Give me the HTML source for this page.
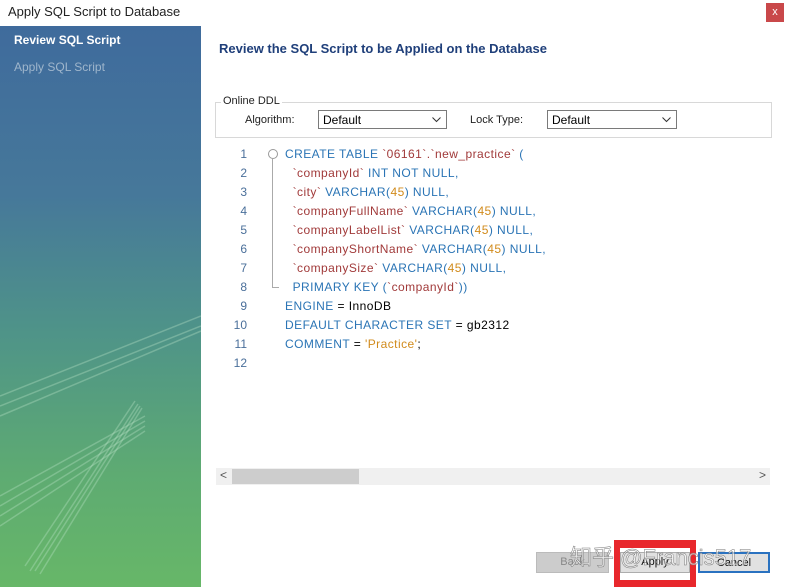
<!DOCTYPE html><html><head><style>
body{margin:0;width:786px;height:587px;position:relative;background:#fff;font-family:"Liberation Sans","Noto Sans CJK SC",sans-serif;overflow:hidden;font-size:12px}
.a{position:absolute}
.side{left:0;top:26px;width:201px;height:561px;background:linear-gradient(180deg,#3f6b9c 0%,#46789a 30%,#4f9488 55%,#5eab72 80%,#67b768 100%)}
.code div{height:19px;line-height:19px;white-space:pre}
.k{color:#2a74b5}.s{color:#a13a3a}.n{color:#d18b1c}
.ln{color:#4a6f9a;width:20px;text-align:right}
.sel{border:1px solid #7a7a7a;height:19px;background:#fff;font-size:12px;line-height:18px;padding-left:4px;box-sizing:border-box}
.btn{height:21px;box-sizing:border-box;text-align:center;line-height:19px;font-size:11px}
</style></head><body>
<div class="a" style="left:8px;top:4px;font-size:13px;color:#222">Apply SQL Script to Database</div>
<div class="a" style="left:766px;top:3px;width:18px;height:19px;background:#c9484a;color:#fff;font-size:11px;text-align:center;line-height:18px">x</div>
<div class="a side">
<svg width="201" height="561" style="position:absolute;left:0;top:0" fill="none" stroke="rgba(190,230,200,0.35)" stroke-width="1.5">
<path d="M0 370 L201 290 M0 380 L201 300 M0 390 L201 305 M0 470 L145 390 M0 480 L145 395 M0 490 L145 400 M0 500 L145 405"/>
<path d="M25 540 L135 375 M30 545 L138 378 M35 545 L140 380 M40 548 L142 382"/>
</svg>
</div>
<div class="a" style="left:14px;top:33px;color:#fff;font-weight:bold;font-size:12px">Review SQL Script</div>
<div class="a" style="left:14px;top:60px;color:#9fb6cc;font-size:12px">Apply SQL Script</div>
<div class="a" style="left:219px;top:41px;color:#1f3f7a;font-weight:bold;font-size:13px">Review the SQL Script to be Applied on the Database</div>
<div class="a" style="left:215px;top:102px;width:555px;height:34px;border:1px solid #d8d8d8"></div>
<div class="a" style="left:221px;top:95px;background:#fff;padding:0 2px;font-size:11px;color:#222">Online DDL</div>
<div class="a" style="left:245px;top:114px;font-size:11px;color:#222">Algorithm:</div>
<div class="a sel" style="left:318px;top:110px;width:129px">Default<svg class="a" style="right:5px;top:6px" width="9" height="6"><path d="M0.5 0.5L4.5 4.5L8.5 0.5" fill="none" stroke="#333"/></svg></div>
<div class="a" style="left:470px;top:114px;font-size:11px;color:#222">Lock Type:</div>
<div class="a sel" style="left:547px;top:110px;width:130px">Default<svg class="a" style="right:5px;top:6px" width="9" height="6"><path d="M0.5 0.5L4.5 4.5L8.5 0.5" fill="none" stroke="#333"/></svg></div>
<div class="a code" style="left:227px;top:145px;font-size:12px">
<div><span class="a ln">1</span></div><div><span class="a ln">2</span></div><div><span class="a ln">3</span></div><div><span class="a ln">4</span></div><div><span class="a ln">5</span></div><div><span class="a ln">6</span></div><div><span class="a ln">7</span></div><div><span class="a ln">8</span></div><div><span class="a ln">9</span></div><div><span class="a ln">10</span></div><div><span class="a ln">11</span></div><div><span class="a ln">12</span></div>
</div>
<div class="a" style="left:268px;top:149px;width:8px;height:8px;border:1px solid #999;border-radius:50%"></div>
<div class="a" style="left:272px;top:159px;width:6px;height:128px;border-left:1px solid #aaa;border-bottom:1px solid #aaa"></div>
<div class="a code" style="left:285px;top:145px;font-size:12px;letter-spacing:0.45px">
<div><span class="k">CREATE TABLE </span><span class="s">`06161`.`new_practice`</span><span class="k"> (</span></div>
<div>  <span class="s">`companyId`</span><span class="k"> INT NOT NULL,</span></div>
<div>  <span class="s">`city`</span><span class="k"> VARCHAR(</span><span class="n">45</span><span class="k">) NULL,</span></div>
<div>  <span class="s">`companyFullName`</span><span class="k"> VARCHAR(</span><span class="n">45</span><span class="k">) NULL,</span></div>
<div>  <span class="s">`companyLabelList`</span><span class="k"> VARCHAR(</span><span class="n">45</span><span class="k">) NULL,</span></div>
<div>  <span class="s">`companyShortName`</span><span class="k"> VARCHAR(</span><span class="n">45</span><span class="k">) NULL,</span></div>
<div>  <span class="s">`companySize`</span><span class="k"> VARCHAR(</span><span class="n">45</span><span class="k">) NULL,</span></div>
<div><span class="k">  PRIMARY KEY (</span><span class="s">`companyId`</span><span class="k">))</span></div>
<div><span class="k">ENGINE </span>= InnoDB</div>
<div><span class="k">DEFAULT CHARACTER SET </span>= gb2312</div>
<div><span class="k">COMMENT </span>= <span class="n">'Practice'</span>;</div>
<div></div>
</div>
<div class="a" style="left:216px;top:468px;width:554px;height:17px;background:#f0f0f0"></div>
<div class="a" style="left:232px;top:469px;width:127px;height:15px;background:#cdcdcd"></div>
<div class="a" style="left:220px;top:468px;color:#555;font-size:12px">&lt;</div>
<div class="a" style="left:759px;top:468px;color:#555;font-size:12px">&gt;</div>
<div class="a btn" style="left:536px;top:552px;width:73px;background:#ccc;border:1px solid #bbb;color:#888">Back</div>
<div class="a" style="left:614px;top:540px;width:82px;height:47px;background:#e8272c"></div>
<div class="a btn" style="left:620px;top:548px;width:70px;height:32px;background:#fff"></div>
<div class="a btn" style="left:620px;top:552px;width:70px;background:#e1e1e1;border:1px solid #adadad;color:#111">Apply</div>
<div class="a btn" style="left:698px;top:552px;width:72px;background:#e1e1e1;border:2px solid #2a72c0;color:#111">Cancel</div>
<div class="a" style="left:570px;top:540px;font-size:22px;color:rgba(255,255,255,0.6);-webkit-text-stroke:0.5px #777">知乎 @Francis517</div>
</body></html>
